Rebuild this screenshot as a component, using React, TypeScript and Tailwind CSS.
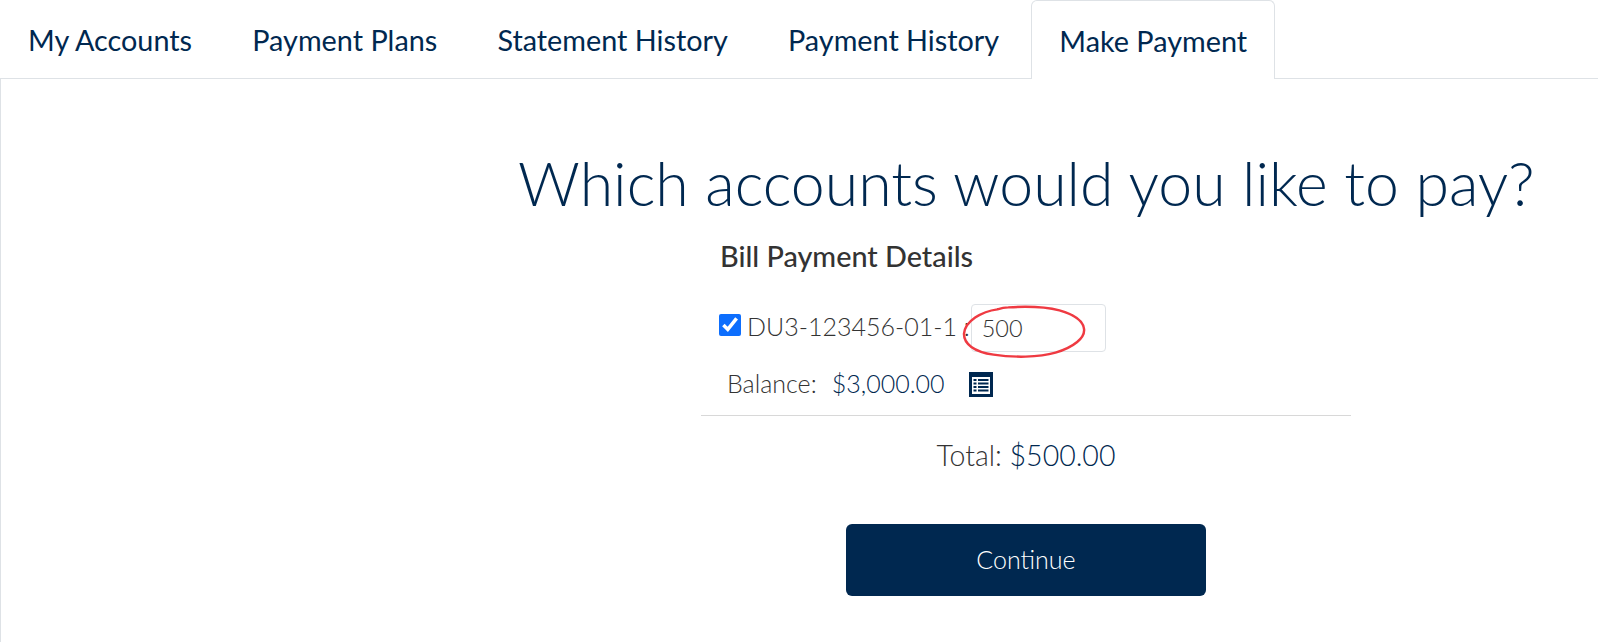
const tabs = ["My Accounts", "Payment Plans", "Statement History", "Payment History"];

export default function App() {
  return (
    <div className="h-[642px] w-[1598px] overflow-hidden bg-white font-['Lato','Open_Sans',sans-serif]">
      <ul className="flex h-[79px] gap-[4.2px] border-b border-[#dee2e6] text-[28.8px] text-[#002850]">
        {tabs.map((tab) => (
          <li key={tab} className="px-[28px] pt-[20px] leading-[40px]">
            {tab}
          </li>
        ))}
        <li className="relative -mb-px h-[79px] rounded-t-md border border-b-0 border-[#dee2e6] bg-white px-[27px] pt-[20px] leading-[40px]">
          Make Payment
        </li>
      </ul>
      <div className="h-[563px] border-l border-[#dee2e6] pl-[519px]">
        <h1 className="-ml-[2px] whitespace-nowrap pt-[65px] text-[60.8px] font-light leading-[77px] text-[#002850]">
          Which accounts would you like to pay?
        </h1>
        <div className="ml-[181px] w-[650px]">
          <h2 className="pl-[19px] pt-[18px] text-[28.8px] font-medium leading-[35px] text-[#333333]">
            Bill Payment Details
          </h2>
          <div className="mt-[30px] flex h-[48px] items-center pl-[18px] text-[25px] font-light text-[#333333]">
            <input type="checkbox" defaultChecked className="mb-[6px] h-[22px] w-[22px] accent-[#0d6efd]" />
            <span className="mb-[2px] ml-[6px] whitespace-nowrap">DU3-123456-01-1 :</span>
            <div className="relative ml-[1px]">
              <input
                defaultValue="500"
                className="h-[48px] w-[135px] rounded border border-[#dee2e6] bg-white pl-[10px] text-[23.5px] font-light text-[#333333] outline-none"
              />
              <svg className="pointer-events-none absolute -left-[9px] top-0 h-[56px] w-[126px]" viewBox="0 0 128 56" fill="none">
                <path
                  d="M36 5C20 7 3 17 2 30c0 10 10 18 30 21 20 3 46 3 63-2 19-6 30-15 29-24-1-9-11-15-25-19-16-4-36-4-52-3-4 0-8 1-11 2"
                  stroke="#ef3a42"
                  strokeWidth="2.5"
                  strokeLinecap="round"
                />
              </svg>
            </div>
          </div>
          <div className="mt-[12px] flex h-[40px] items-center pl-[26px] text-[25px] font-light text-[#333333]">
            <span>Balance:</span>
            <span className="ml-[15px] text-[#002850]">$3,000.00</span>
            <svg className="ml-[25px] h-[25px] w-[24px]" viewBox="0 0 24 25">
              <rect x="0" y="0" width="24" height="25" fill="#002850" />
              <rect x="3" y="5" width="18" height="17" fill="#ffffff" />
              <g fill="#002850">
                <rect x="4.5" y="7" width="3" height="2" />
                <rect x="9" y="7" width="10.5" height="2" />
                <rect x="4.5" y="10.5" width="3" height="2" />
                <rect x="9" y="10.5" width="10.5" height="2" />
                <rect x="4.5" y="14" width="3" height="2" />
                <rect x="9" y="14" width="10.5" height="2" />
                <rect x="4.5" y="17.5" width="3" height="2" />
                <rect x="9" y="17.5" width="10.5" height="2" />
              </g>
            </svg>
          </div>
          <div className="mt-[11px] border-t border-[#d8d8d8] pt-[17px] text-center text-[28.5px] font-light leading-[44px] text-[#333333]">
            Total: <span className="text-[#002850]">$500.00</span>
          </div>
          <div className="mt-[47px] flex justify-center">
            <button className="h-[72px] w-[360px] rounded-md bg-[#002850] text-[25px] font-light text-white">Continue</button>
          </div>
        </div>
      </div>
    </div>
  );
}
